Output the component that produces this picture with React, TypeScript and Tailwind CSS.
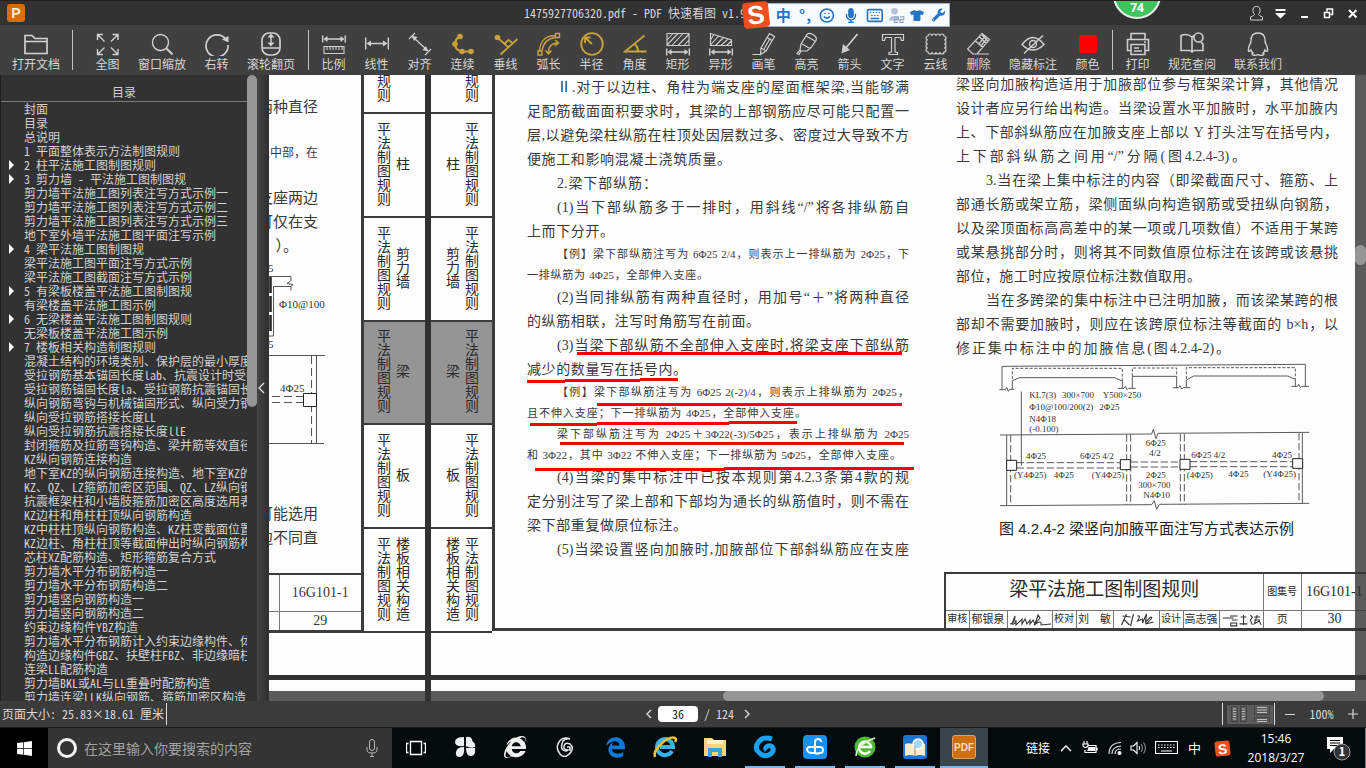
import type { ReactNode } from "react";
import { FaInternetExplorer, FaMicrophone, FaTshirt, FaWindows, FaWrench } from "react-icons/fa";
import { FaEdgeLegacy } from "react-icons/fa6";
import { Keyboard, Smile } from "lucide-react";
import clsx from "clsx";

interface Tool {
    label: string;
    icon: ReactNode;
    gold?: boolean;
    wide?: boolean;
}

interface Line {
    text: string;
    indent?: boolean;
    small?: boolean;
    width?: string;
}

function Glyph({ children }: { children: ReactNode }) {
    return (
        <svg viewBox="0 0 24 24" className="size-6" fill="none" stroke="currentColor" strokeWidth="1.4" aria-hidden="true">
            {children}
        </svg>
    );
}

const viewTools: Tool[] = [
    {
        label: "全图",
        icon: <Glyph><path d="M1.5 8V2.500H7M1.5 2.500l7 7M16.5 2.500H22V8M22 2.500l-7 7M1.5 17v5.500H7M1.5 22.500l7-7M22 17v5.500h-5.500M22 22.500l-7-7" /></Glyph>,
    },
    {
        label: "窗口缩放",
        wide: true,
        icon: <Glyph><circle cx="10.5" cy="10.5" r="8" /><path d="M16.5 16.5l6 6" strokeWidth="2" /></Glyph>,
    },
    {
        label: "右转",
        icon: <Glyph><path d="M21 7.500A11 11 0 1 0 23 13" strokeWidth="1.7" /><path d="M23.5 4v6.500l-6.500-3z" fill="currentColor" stroke="none" /></Glyph>,
    },
    {
        label: "滚轮翻页",
        wide: true,
        icon: (
            <Glyph>
                <rect x="3" y="1" width="18" height="22" rx="7" strokeWidth="1.7" />
                <path d="M3 16h18M12 4v9" />
                <path d="M12 1.5l3.5 4h-7zM12 14.5l3.5-4h-7z" fill="currentColor" stroke="none" />
            </Glyph>
        ),
    },
];

const spanArrow = (y: number) => (
    <>
        <path d={`M.7 ${y - 3.5}v7M23.3 ${y - 3.5}v7M3 ${y}h18`} />
        <path d={`M1.5 ${y}l4-3v6zM22.5 ${y}l-4-3v6z`} fill="currentColor" stroke="none" />
    </>
);

const drawTools: Tool[] = [
    { label: "比例", icon: <Glyph>{spanArrow(7)}<path d="M2 14.5h20v7H2zM5 15v3M8 15v3M11 15v3M14 15v3M17 15v3M20 15v3" strokeWidth="1.1" /></Glyph> },
    { label: "线性", icon: <Glyph><path d="M.7 5.5v12M23.3 5.5v12M3 11.5h18" /><path d="M1.5 11.5l4.5-3v6zM22.5 11.5l-4.5-3v6z" fill="currentColor" stroke="none" /></Glyph> },
    { label: "对齐", icon: <Glyph><path d="M1 7L7 1M17 23l6-6M5 5l14 13" strokeWidth="1.2" /><path d="M3.5 3.5l6 1.5-3.5 4zM20.5 19.5l-6-1.5 3.5-4z" fill="currentColor" stroke="none" /></Glyph> },
    {
        label: "连续",
        gold: true,
        icon: (
            <Glyph>
                <path d="M9 4.5Q4 7 4 12q0 6 7 7.5h9" strokeWidth="2" />
                <g fill="currentColor" stroke="none"><circle cx="9" cy="4.5" r="2.800" /><circle cx="4" cy="12" r="2.800" /><circle cx="11" cy="19.5" r="2.800" /><circle cx="20" cy="19.5" r="2.800" /></g>
            </Glyph>
        ),
    },
    { label: "垂线", gold: true, icon: <Glyph><path d="M4 6l10 9M6.5 22.5L23.5 7M10 12l4.5-4 4.5 3.5" strokeWidth="1.8" /><circle cx="3.5" cy="5.5" r="2.800" fill="currentColor" stroke="none" /></Glyph> },
    {
        label: "弧长",
        gold: true,
        icon: <Glyph><path d="M2.5 19C3 9 9 3.500 18.5 3.500M1 19h4v4H1zM18.5 1.5h4v4h-4zM5 19Q6.500 7 18.500 5.500M11.5 21Q11 11.500 21 11M8.500 18.500l3 3.500 3-3.500M18 8l3.500 3-3.500 3" /></Glyph>,
    },
    { label: "半径", gold: true, icon: <Glyph><circle cx="12" cy="12" r="10.8" strokeWidth="1.8" /><path d="M12 12L5.5 6M5 11V5.500h5.500" strokeWidth="1.8" /></Glyph> },
    { label: "角度", gold: true, icon: <Glyph><path d="M21.5 3.500L2 19.5h21.5M11.5 12q4 3 3.5 7.500" strokeWidth="1.8" /></Glyph> },
    { label: "矩形", icon: <Glyph><path d="M1 1.5h22v12H1zM1 8l6-6.5M1 13l11-11.500M6 13.500L17 1.500M12 13.500L23 2M18 13.500l5-5.500" strokeWidth="1.1" />{spanArrow(20)}</Glyph> },
    { label: "异形", icon: <Glyph><path d="M1.5 1.5L22.5 8v5.500h-21zM1.5 8l3-5M1.5 13l8-9M6.500 13.500l8-8M12 13.500l6.500-6M17.500 13.500L22.500 9" strokeWidth="1.1" />{spanArrow(20)}</Glyph> },
    { label: "画笔", icon: <Glyph><path d="M17.5 1.5l5 3L14 19l-5.500 3.500L9 16zM15 5.500l5 3M9 16l5 3M.5 22.500H8M17.500 7.500L12 17" strokeWidth="1.2" /></Glyph> },
    { label: "高亮", icon: <Glyph><path d="M12 2.500q2-2 5-.5l3 2q2 2 1 4.500L16.500 15 12 19H6l-1-1 1-6zM11 4l9 5M7 12l8 4.500M5 18l1 1-2 3.500-2-1z" strokeWidth="1.2" /></Glyph> },
    { label: "箭头", icon: <Glyph><path d="M19.500 2L7 17" strokeWidth="1.7" /><path d="M3.500 21.500L5 12l7 6z" fill="currentColor" stroke="none" /></Glyph> },
    { label: "文字", icon: <Glyph><path d="M1.5 2.500h21v6h-2l-1-3h-5.500V20l2.500.5v2H8v-2l2.500-.5V5.500h-6l-1 3h-2z" strokeWidth="1.2" /></Glyph> },
    {
        label: "云线",
        icon: (
            <Glyph>
                <path
                    d="M4 4a2 2 0 0 1 4 0a2 2 0 0 1 4 0a2 2 0 0 1 4 0a2 2 0 0 1 4 0a2 2 0 0 1 0 4a2 2 0 0 1 0 4a2 2 0 0 1 0 4a2 2 0 0 1 0 4a2 2 0 0 1-4 0a2 2 0 0 1-4 0a2 2 0 0 1-4 0a2 2 0 0 1-4 0a2 2 0 0 1 0-4a2 2 0 0 1 0-4a2 2 0 0 1 0-4a2 2 0 0 1 0-4z"
                    strokeWidth="1.2"
                />
            </Glyph>
        ),
    },
    { label: "删除", icon: <Glyph><path d="M15 1.500l7.500 6L10 22H6l-5.500-5zM8.500 9l7.500 6.500M5 22h17M12.500 5l7 6.500M15 3l6 6M18 4.500l-6.500 8M20 6.500l-6.500 8" strokeWidth="1.200" /></Glyph> },
];

const lineClass = "h-full w-px shrink-0 bg-[#c4c4c4]";

function ToolButton({ tool }: { tool: Tool }) {
    return (
        <button
            type="button"
            className={clsx(
                "flex h-full shrink-0 flex-col items-center pt-[7px] text-[12px] leading-[15px] whitespace-nowrap text-[#d6d6d6]",
                tool.wide ? "w-[66px]" : "w-[43px]"
            )}
        >
            <span className={tool.gold ? "text-[#c9a13b]" : "text-[#cfcfcf]"}>{tool.icon}</span>
            {tool.label}
        </button>
    );
}

function ImeBar() {
    return (
        <div className="absolute top-[2px] left-[746px] flex h-6 w-[204px] items-center gap-1 border border-[#9fb4c8] bg-[#f8fbfe] pr-1 text-[#2373c8]">
            <span className="-ml-1 flex size-[26px] shrink-0 -rotate-6 items-center justify-center rounded bg-[#f04e1f] font-['Liberation_Sans'] text-[26px] leading-none font-bold text-white">S</span>
            <span className="w-[22px] text-center text-[15px] font-bold">中</span>
            <span className="w-[18px] text-center text-[15px] font-bold">°,</span>
            <Smile className="mx-px size-[17px]" strokeWidth={2.4} />
            <FaMicrophone className="mx-1 size-[15px]" />
            <Keyboard className="size-[19px]" strokeWidth={2.2} />
            <svg viewBox="0 0 18 18" className="mx-px size-[18px]" fill="#b3c2d8">
                <circle cx="7" cy="5" r="3.5" />
                <path d="M1 15q0-5 6-5t5 5z" />
                <path d="M7 11h4v3H7v3h4M13 11h4v3h-4v3h4" fill="none" stroke="#8ea5c6" strokeWidth="1.2" />
            </svg>
            <FaTshirt className="size-[15px]" />
            <FaWrench className="ml-1 size-[14px]" />
        </div>
    );
}

function TitleBar() {
    return (
        <header className="relative flex h-[25px] shrink-0 items-center overflow-visible border-t border-[#222] bg-[#323232] text-[#d6d6d6]">
            <span className="ml-[7px] flex size-[18px] items-center justify-center rounded-[3px] bg-[#d46f0e] font-['Liberation_Sans'] text-[14px] leading-none font-bold text-[#f8ead8]">P</span>
            <h1 className="ml-[499px] text-[12px] whitespace-nowrap">1475927706320.pdf - PDF 快速看图 v1.9</h1>
            <div className="ml-auto flex h-full items-center gap-[9px] pr-[6px] text-white">
                <button type="button" aria-label="用户">
                    <svg viewBox="0 0 15 15" className="size-[15px]" fill="none" stroke="#d0d0d0">
                        <path d="M7.500.5q4 0 3.500 4.500 0 2-1.500 3.500 0 1 4 2.500v3H1.500v-3q4-1.500 4-2.500Q4 7 4 5 3.500.5 7.500.5z" />
                    </svg>
                </button>
                <button type="button" aria-label="菜单">
                    <svg viewBox="0 0 15 15" className="size-[15px]" fill="currentColor"><path d="M2.500 3h10v2h-10zM2 7h11l-5.500 5.500z" /></svg>
                </button>
                <button type="button" aria-label="最小化">
                    <svg viewBox="0 0 15 15" className="size-[15px]" fill="currentColor"><path d="M4 10h7v2H4z" /></svg>
                </button>
                <button type="button" aria-label="还原">
                    <svg viewBox="0 0 15 15" className="size-[15px]" fill="none" stroke="currentColor" strokeWidth="1.5"><path d="M3.500 6.500h5v5h-5zM6 5.500V3h5.500v5.500H9.500" /></svg>
                </button>
                <button type="button" aria-label="关闭">
                    <svg viewBox="0 0 15 15" className="size-[15px]" fill="none" stroke="currentColor" strokeWidth="2"><path d="M4 4l7.500 7.500M11.500 4L4 11.500" /></svg>
                </button>
            </div>
            <ImeBar />
            <div className="absolute top-0 right-[205px] z-10 flex h-[18px] w-12 items-end justify-center overflow-hidden">
                <span className="flex size-12 shrink-0 items-end justify-center rounded-full border-2 border-[#e6efe8] bg-[#3fc45c] pb-[2px] font-['Open_Sans'] text-[12px] leading-[14px] font-bold text-white">74</span>
            </div>
        </header>
    );
}

function ToolBar() {
    return (
        <div className="flex h-[50px] shrink-0 bg-[#404040]" role="toolbar" aria-label="工具">
            <button type="button" className="flex w-[72px] shrink-0 flex-col items-center pt-[7px] text-[12px] leading-[15px] text-[#d6d6d6]">
                <Glyph><path d="M1 21.500v-18h7l3 3h12v15zM1 9.500h22" strokeWidth="1.6" /></Glyph>
                打开文档
            </button>
            <div className="py-[5px]"><div className={lineClass} /></div>
            <div className="ml-[13px] flex">
                {viewTools.map((tool) => <ToolButton key={tool.label} tool={tool} />)}
            </div>
            <div className="ml-1 py-[5px]"><div className={lineClass} /></div>
            <div className="ml-[3px] flex">
                {drawTools.map((tool) => <ToolButton key={tool.label} tool={tool} />)}
                <ToolButton tool={{ label: "隐藏标注", wide: true, icon: <Glyph><path d="M1 12.500q11-14 22 0-11 11-22 0zM22 3.500l-19 18" /><circle cx="12" cy="12" r="3.5" /></Glyph> }} />
                <ToolButton tool={{ label: "颜色", icon: <Glyph><rect x="3" y="3" width="18" height="18" rx="2" fill="#ff0000" stroke="none" /></Glyph> }} />
            </div>
            <div className="ml-[3px] py-[5px]"><div className={lineClass} /></div>
            <div className="ml-[3px] flex">
                <ToolButton tool={{ label: "打印", icon: <Glyph><path d="M5 7V1.500h14V7M4.500 18.500H1.500v-11h21v11h-3M5 12.500h14v10H5zM8 16h5M8 19h8M18 10h2" strokeWidth="1.6" /></Glyph> }} />
                <ToolButton tool={{ label: "规范查阅", wide: true, icon: <Glyph><path d="M12 20.500V5Q7 1 1 3.500v15h8.500q2 0 2.500 2 .5-2 2.500-2H23v-7M12 5q1-1 2.500-1.500M21 10l2.500 3" strokeWidth="1.6" /><circle cx="18.5" cy="5.5" r="4.5" strokeWidth="1.6" /></Glyph> }} />
                <ToolButton tool={{ label: "联系我们", wide: true, icon: <Glyph><path d="M12 1q7 0 7 7.500 0 2 1 3.500 2 4 1.500 7-1 1-2.500-1-.5 2-2 3 2 1 0 2-3 1-5-.5-2 1.500-5 .5-2-1 0-2-1.500-1-2-3-1.500 2-2.500 1-.5-3 1.500-7 1-1.500 1-3.500Q5 1 12 1z" /></Glyph> }} />
            </div>
        </div>
    );
}

const outline: { text: string; branch?: boolean }[] = [
    { text: "封面" },
    { text: "目录" },
    { text: "总说明" },
    { text: "1 平面整体表示方法制图规则" },
    { text: "2 柱平法施工图制图规则", branch: true },
    { text: "3 剪力墙 - 平法施工图制图规", branch: true },
    { text: "剪力墙平法施工图列表注写方式示例一" },
    { text: "剪力墙平法施工图列表注写方式示例二" },
    { text: "剪力墙平法施工图列表注写方式示例三" },
    { text: "地下室外墙平法施工图平面注写示例" },
    { text: "4 梁平法施工图制图规", branch: true },
    { text: "梁平法施工图平面注写方式示例" },
    { text: "梁平法施工图截面注写方式示例" },
    { text: "5 有梁板楼盖平法施工图制图规", branch: true },
    { text: "有梁楼盖平法施工图示例" },
    { text: "6 无梁楼盖平法施工图制图规则", branch: true },
    { text: "无梁板楼盖平法施工图示例" },
    { text: "7 楼板相关构造制图规则", branch: true },
    { text: "混凝土结构的环境类别、保护层的最小厚度" },
    { text: "受拉钢筋基本锚固长度lab、抗震设计时受拉" },
    { text: "受拉钢筋锚固长度la、受拉钢筋抗震锚固长度" },
    { text: "纵向钢筋弯钩与机械锚固形式、纵向受力钢筋" },
    { text: "纵向受拉钢筋搭接长度LL" },
    { text: "纵向受拉钢筋抗震搭接长度llE" },
    { text: "封闭箍筋及拉筋弯钩构造、梁并筋等效直径" },
    { text: "KZ纵向钢筋连接构造" },
    { text: "地下室KZ的纵向钢筋连接构造、地下室KZ的" },
    { text: "KZ、QZ、LZ箍筋加密区范围、QZ、LZ纵向钢筋" },
    { text: "抗震框架柱和小墙肢箍筋加密区高度选用表" },
    { text: "KZ边柱和角柱柱顶纵向钢筋构造" },
    { text: "KZ中柱柱顶纵向钢筋构造、KZ柱变截面位置" },
    { text: "KZ边柱、角柱柱顶等截面伸出时纵向钢筋构造" },
    { text: "芯柱XZ配筋构造、矩形箍筋复合方式" },
    { text: "剪力墙水平分布钢筋构造一" },
    { text: "剪力墙水平分布钢筋构造二" },
    { text: "剪力墙竖向钢筋构造一" },
    { text: "剪力墙竖向钢筋构造二" },
    { text: "约束边缘构件YBZ构造" },
    { text: "剪力墙水平分布钢筋计入约束边缘构件、体积" },
    { text: "构造边缘构件GBZ、扶壁柱FBZ、非边缘暗柱" },
    { text: "连梁LL配筋构造" },
    { text: "剪力墙BKL或AL与LL重叠时配筋构造" },
    { text: "剪力墙连梁LLK纵向钢筋、箍筋加密区构造" },
];

function Sidebar() {
    return (
        <aside className="flex w-[269px] shrink-0 overflow-hidden border-l border-[#1e1e1e] bg-[#323232] text-[#d2d2d2]">
            <nav className="w-[246px] shrink-0 overflow-hidden text-[12px]" aria-label="目录">
                <h2 className="flex h-[27px] items-end justify-center border-b border-[#7c7c7c] leading-[18px]">目录</h2>
                <ul>
                    {outline.map((item) => (
                        <li key={item.text} className="flex h-[14px] items-center pl-2">
                            <span className="flex w-[15px] shrink-0">
                                {item.branch && (
                                    <svg viewBox="0 0 5 10" className="h-[10px] w-[5px]" fill="#fff"><path d="M0 0l5 5-5 5z" /></svg>
                                )}
                            </span>
                            <a href="#" className="leading-[14px] whitespace-nowrap">{item.text}</a>
                        </li>
                    ))}
                </ul>
            </nav>
            <div className="w-[10px] shrink-0">
                <div className="h-[332px] rounded-full bg-[#969696]" />
            </div>
            <button type="button" aria-label="收起" className="flex w-3 shrink-0 items-center bg-linear-to-r from-[#444] to-[#2f2f2f]">
                <svg viewBox="0 0 8 12" className="h-3 w-2" fill="none" stroke="#e4e4e4" strokeWidth="1.3"><path d="M7 1L2 6l5 5" /></svg>
            </button>
        </aside>
    );
}

const chapters = ["柱", "剪力墙", "梁", "板", "楼板相关构造"];

function ChapterTabs({ mirrored }: { mirrored?: boolean }) {
    const cell = clsx("flex justify-start gap-[5px] border-b-2 border-[#3c3c3c] px-[13px]", mirrored && "flex-row-reverse");
    return (
        <div className="flex h-[558px] w-[61px] shrink-0 flex-col text-[14px] leading-[14px] text-[#2a2a2a]">
            <div className={clsx(cell, "h-[39px] items-end pb-[9px]")}>
                <span className="w-[14px]">规则</span>
            </div>
            {chapters.map((name) => (
                <div key={name} className={clsx(cell, "flex-1 items-center", name === "梁" && "bg-[#959595]")}>
                    <span className="w-[14px]">平法制图规则</span>
                    <span className="w-[14px]">{name}</span>
                </div>
            ))}
        </div>
    );
}

function SectionSketch() {
    return (
        <svg viewBox="0 0 92 190" className="h-[190px] w-[92px]" fill="none" stroke="#555" strokeWidth="1">
            <path d="M0 18.500h22v4l-4 3 6 1-2 2M5 28.500h17v4M4.500 28v50H0M0 97.500h56M47.500 97.500v88M0 185.500h55" />
            <path d="M1.500 19v56" strokeWidth="2.5" stroke="#222" strokeDasharray="16 3" />
            <path d="M42.500 98v87M3 138.500h31M3 144.500h31" strokeDasharray="8 4" />
            <path d="M34.500 135.500h13v13h-13z" fill="#fff" stroke="#222" />
            <g fill="#333" stroke="none" fontSize="11" className="font-['Liberation_Serif']">
                <text x="-1" y="14">5</text>
                <text x="10" y="50">Φ10@100</text>
                <text x="-1" y="90">5</text>
                <text x="11" y="134">4Φ25</text>
            </g>
        </svg>
    );
}

function LeftPage() {
    const row = "flex h-6 shrink-0 items-center justify-end whitespace-nowrap";
    return (
        <div className="flex h-[600px] w-[156px] shrink-0 items-start overflow-hidden bg-[#fdfdfd]">
            <div className="flex h-[558px] w-[95px] shrink-0 flex-col overflow-hidden border-r-[3px] border-b-[3px] border-[#3c3c3c] text-[15px]">
                <div className="flex flex-col pt-5 pr-[43px]">
                    <p className={row}>两种直径</p>
                    <p className={clsx(row, "mt-[22px] text-[12px]")}>主中部，在</p>
                    <p className={clsx(row, "mt-[21px]")}>支座两边</p>
                    <p className={row}>可仅在支</p>
                    <p className={clsx(row, "pr-5")}>）。</p>
                </div>
                <SectionSketch />
                <div className="flex flex-col pt-[54px] pr-[43px]">
                    <p className={row}>可能选用</p>
                    <p className={row}>边不同直</p>
                </div>
                <table className="mt-auto h-[57px] w-full table-fixed border-t-2 border-[#3c3c3c] text-center">
                    <tbody>
                        <tr className="h-[37px]">
                            <td className="w-[10px] border-r border-[#777]" />
                            <td className="text-[14px]">16G101-1</td>
                        </tr>
                        <tr className="border-t border-[#777]">
                            <td className="border-r border-[#777]" />
                            <td className="text-[14px] leading-[16px]">29</td>
                        </tr>
                    </tbody>
                </table>
            </div>
            <ChapterTabs />
        </div>
    );
}

const mainText: Line[] = [
    { text: "Ⅱ.对于以边柱、角柱为端支座的屋面框架梁,当能够满", indent: true },
    { text: "足配筋截面面积要求时，其梁的上部钢筋应尽可能只配置一" },
    { text: "层,以避免梁柱纵筋在柱顶处因层数过多、密度过大导致不方" },
    { text: "便施工和影响混凝土浇筑质量。", width: "w-[204px]" },
    { text: "2.梁下部纵筋：", indent: true, width: "w-[130px]" },
    { text: "(1)当下部纵筋多于一排时，用斜线“/”将各排纵筋自", indent: true },
    { text: "上而下分开。", width: "w-[87px]" },
    { text: "【例】梁下部纵筋注写为 6Φ25 2/4，则表示上一排纵筋为 2Φ25，下", indent: true, small: true },
    { text: "一排纵筋为 4Φ25，全部伸入支座。", small: true, width: "w-[181px]" },
    { text: "(2)当同排纵筋有两种直径时，用加号“＋”将两种直径", indent: true },
    { text: "的纵筋相联，注写时角筋写在前面。", width: "w-[233px]" },
    { text: "(3)当梁下部纵筋不全部伸入支座时,将梁支座下部纵筋", indent: true },
    { text: "减少的数量写在括号内。", width: "w-[160px]" },
    { text: "【例】梁下部纵筋注写为 6Φ25 2(-2)/4，则表示上排纵筋为 2Φ25，", indent: true, small: true },
    { text: "且不伸入支座；下一排纵筋为 4Φ25，全部伸入支座。", small: true, width: "w-[279px]" },
    { text: "梁下部纵筋注写为 2Φ25＋3Φ22(-3)/5Φ25，表示上排纵筋为 2Φ25", indent: true, small: true },
    { text: "和 3Φ22，其中 3Φ22 不伸入支座；下一排纵筋为 5Φ25，全部伸入支座。", small: true, width: "w-[374px]" },
    { text: "(4)当梁的集中标注中已按本规则第4.2.3条第4款的规", indent: true },
    { text: "定分别注写了梁上部和下部均为通长的纵筋值时，则不需在" },
    { text: "梁下部重复做原位标注。", width: "w-[160px]" },
    { text: "(5)当梁设置竖向加腋时,加腋部位下部斜纵筋应在支座", indent: true },
];

const sideText: Line[] = [
    { text: "梁竖向加腋构造适用于加腋部位参与框架梁计算，其他情况" },
    { text: "设计者应另行给出构造。当梁设置水平加腋时，水平加腋内" },
    { text: "上、下部斜纵筋应在加腋支座上部以 Y 打头注写在括号内，" },
    { text: "上下部斜纵筋之间用“/”分隔(图4.2.4-3)。", width: "w-[290px]" },
    { text: "3.当在梁上集中标注的内容（即梁截面尺寸、箍筋、上", indent: true },
    { text: "部通长筋或架立筋，梁侧面纵向构造钢筋或受扭纵向钢筋，" },
    { text: "以及梁顶面标高高差中的某一项或几项数值）不适用于某跨" },
    { text: "或某悬挑部分时，则将其不同数值原位标注在该跨或该悬挑" },
    { text: "部位，施工时应按原位标注数值取用。", width: "w-[245px]" },
    { text: "当在多跨梁的集中标注中已注明加腋，而该梁某跨的根", indent: true },
    { text: "部却不需要加腋时，则应在该跨原位标注等截面的 b×h，以" },
    { text: "修正集中标注中的加腋信息(图4.2.4-2)。", width: "w-[274px]" },
];

function Paragraphs({ lines }: { lines: Line[] }) {
    return (
        <>
            {lines.map((line) => (
                <p
                    key={line.text}
                    className={clsx(
                        "[text-align-last:justify]",
                        line.small ? "h-[21px] text-[11px] leading-[21px]" : "h-6 text-[14px] leading-6",
                        line.indent && "pl-[30px]",
                        line.width ?? "w-[382px]"
                    )}
                >
                    {line.text}
                </p>
            ))}
        </>
    );
}

function RedMarks() {
    return (
        <svg viewBox="0 0 400 480" className="pointer-events-none absolute top-0 left-0 h-[480px] w-[400px]" fill="none" stroke="#f80000" strokeWidth="3">
            <path d="M50 278.500h325M0 306.500h38M38 305.500h75M113 304.500h38M70 329.500h305M3 349.500h67M70 348.500h132M202 347.500h68M33 368.500h344M8 394.500h190M197 393.500h190" />
        </svg>
    );
}

const beamLabels: [number, number, string][] = [
    [268, 147, "KL7(3)"],
    [366, 147, "300×700"],
    [488, 147, "Y500×250"],
    [268, 183, "Φ10@100/200(2)"],
    [478, 183, "2Φ25"],
    [268, 219, "N4Φ18"],
    [268, 250, "(-0.100)"],
    [258, 330, "4Φ25"],
    [420, 330, "6Φ25  4/2"],
    [617, 290, "6Φ25"],
    [628, 321, "4/2"],
    [754, 328, "6Φ25  4/2"],
    [996, 328, "4Φ25"],
    [222, 388, "(Y4Φ25)"],
    [341, 388, "4Φ25"],
    [455, 386, "(Y4Φ25)"],
    [617, 386, "2Φ25"],
    [740, 386, "(4Φ25)"],
    [865, 384, "4Φ25"],
    [970, 383, "(Y4Φ25)"],
    [595, 416, "300×700"],
    [610, 448, "N4Φ10"],
];

function BeamDrawing() {
    return (
        <svg viewBox="174 36 936 450" className="ml-[42px] h-[150px] w-[312px] shrink-0" fill="none" stroke="#5a5a5a" strokeWidth="3">
            <path d="M186 121V52l910-6v66M178 122h18l4-7 5 12 4-6h14M217 121V95l22-9h284l24 10v22M534 118h18l4-6 5 10 4-4h22M577 118V82h133v36M698 116h18l4-6 5 10 4-4h22M739 115V93l22-12h282l23 10v21M1054 112h18l4-6 5 10 4-4h22" />
            <path d="M217 90V58h330v38M577 82V57h133v25M739 90V56h327v34" strokeDasharray="9 5" />
            <path d="M244 128v222M180 258l455-3 5-14 8 28 6-16 454-3M180 470l455-3 8-12 7 26 8-15 450-3M200 258v212M1087 252v211" />
            <path d="M212 258v212M560 256v212M572 256v212M721 255v212M733 255v212M1077 252v211M230 341h312M230 357h312M572 339h150M572 354h150M750 338h308M750 353h308" strokeDasharray="22 8" />
            <path d="M200 334h30v30h-30zM541 332h30v30h-30zM720 331h30v30h-30zM1058 329h30v29h-30z" fill="#fff" stroke="#222" />
            <g fill="#333" stroke="none" fontSize="27" className="font-['Liberation_Serif']">
                {beamLabels.map(([x, y, text]) => (
                    <text key={`${x}-${y}`} x={x} y={y}>{text}</text>
                ))}
            </g>
        </svg>
    );
}

function Signature({ d }: { d: string }) {
    return (
        <svg viewBox="0 0 44 16" className="h-4 w-full" fill="none" stroke="#333" strokeWidth="1.1"><path d={d} /></svg>
    );
}

function TitleBlock() {
    const cell = "border-t border-r border-[#777] leading-[16px] whitespace-nowrap";
    const role = clsx(cell, "text-[10px]");
    const name = clsx(cell, "text-[11px]");
    return (
        <table className="mt-auto -ml-3 h-[56px] w-[422px] table-fixed border-t-2 border-l-2 border-[#3c3c3c] text-center text-[#2c2c2c]">
            <colgroup>
                <col className="w-6" /><col className="w-[38px]" /><col className="w-[45px]" />
                <col className="w-6" /><col className="w-[37px]" /><col className="w-[46px]" />
                <col className="w-6" /><col className="w-[36px]" /><col className="w-[44px]" />
                <col className="w-[38px]" /><col className="w-[66px]" />
            </colgroup>
            <tbody>
                <tr className="h-[37px]">
                    <td colSpan={9} className="border-r border-[#777] pb-1 text-[19px]">梁平法施工图制图规则</td>
                    <td className="border-r border-[#777] text-[10px] whitespace-nowrap">图集号</td>
                    <td className="text-[14px]">16G101-1</td>
                </tr>
                <tr>
                    <td className={role}>审核</td>
                    <td className={name}>郁银泉</td>
                    <td className={cell}><Signature d="M2 13q5-1 5-8l-3 8q3 1 4-4v5l6-6v5l3-5 2 5 3-4v4l3-4 2 4 3-9 2 3-6 7q8-6 7 0l10-1" /></td>
                    <td className={role}>校对</td>
                    <td className={name}>刘　敏</td>
                    <td className={cell}><Signature d="M8 5l8 1M12 3L7 14M9 8l6 6M19 3l-3 12M23 5q4-1 0 5l5-2v4l4-9-1 8 5-5q4 0-5 7l8-2" /></td>
                    <td className={role}>设计</td>
                    <td className={name}>高志强</td>
                    <td className={cell}><Signature d="M3 7h11M10 5h8M12 9h6M11 12v3h6v-3zM21 6h6M24 4v10M20 13h8M31 4l2 2-2 3 2 5M35 6h6M38 4l-3 9 5-3 2 4M35 9h6" /></td>
                    <td className={name}>页</td>
                    <td className="border-t border-[#777] text-[14px] leading-[16px]">30</td>
                </tr>
            </tbody>
        </table>
    );
}

function RightPage() {
    return (
        <div className="flex h-[600px] w-[960px] shrink-0 items-start bg-[#fdfdfd]">
            <ChapterTabs mirrored />
            <div className="flex h-[556px] flex-1 border-b-[3px] border-l-[3px] border-[#3c3c3c] pl-8">
                <div className="relative w-[382px] shrink-0 pt-px">
                    <Paragraphs lines={mainText} />
                    <RedMarks />
                </div>
                <div className="ml-[47px] flex flex-1 flex-col">
                    <div className="-mt-[2px]">
                        <Paragraphs lines={sideText} />
                    </div>
                    <BeamDrawing />
                    <p className="ml-[43px] pt-2 font-['Liberation_Sans','Noto_Sans_CJK_SC',sans-serif] text-[15px] leading-5 text-[#222]">图 4.2.4-2 梁竖向加腋平面注写方式表达示例</p>
                    <TitleBlock />
                </div>
            </div>
        </div>
    );
}

function DocumentView() {
    return (
        <main className="relative min-w-0 flex-1 overflow-hidden bg-[#323232] font-['Liberation_Serif','Noto_Sans_CJK_SC',serif] text-[#3a3a3a]">
            <div className="flex gap-[6px]">
                <LeftPage />
                <RightPage />
            </div>
            <div className="mt-[5px] flex gap-[6px]">
                <div className="h-[30px] w-[156px] shrink-0 bg-[#fdfdfd]" />
                <div className="h-[30px] w-[960px] shrink-0 bg-[#fdfdfd]" />
            </div>
            <div className="absolute top-0 right-0 bottom-0 w-[11px] bg-[#323232]/80">
                <div className="mt-[170px] h-5 rounded-full bg-[#969696]" />
            </div>
            <div className="absolute right-[11px] bottom-0 left-0 flex h-[10px] justify-end bg-[#323232]/80 pr-[31px]">
                <div className="w-[57%] rounded-full bg-[#969696]" />
            </div>
        </main>
    );
}

function StatusBar() {
    return (
        <footer className="grid h-[27px] shrink-0 grid-cols-[1fr_auto_1fr] items-center border-b border-[#1c1c1c] bg-[#3b3b3b] text-[12px] text-[#d8d8d8]">
            <div className="flex h-full items-center">
                <span className="flex h-[22px] items-center border-r border-[#ddd] pr-[2px] pl-[2px] whitespace-nowrap">页面大小: 25.83×18.61 厘米</span>
            </div>
            <form className="flex items-center gap-[6px] pl-[30px]">
                <button type="button" aria-label="上一页">
                    <svg viewBox="0 0 6 10" className="h-[10px] w-[6px]" fill="none" stroke="currentColor" strokeWidth="1.4"><path d="M5 1L1 5l4 4" /></svg>
                </button>
                <input aria-label="页码" defaultValue="36" className="h-4 w-10 rounded-[4px] bg-white text-center text-[12px] text-[#222]" />
                <span>/ 124</span>
                <button type="button" aria-label="下一页" className="ml-1">
                    <svg viewBox="0 0 6 10" className="h-[10px] w-[6px]" fill="none" stroke="currentColor" strokeWidth="1.4"><path d="M1 1l4 4-4 4" /></svg>
                </button>
            </form>
            <div className="flex items-center justify-end pr-2">
                <div className="flex h-[22px] items-center border-x border-[#ddd] pr-px pl-1">
                    <div className="flex h-[19px] w-[46px] items-center justify-around bg-[#5c5c5c]">
                        <svg viewBox="0 0 16 16" className="size-4" fill="none" stroke="#bdbdbd" strokeWidth="1">
                            <path d="M.5.5h6v15h-6zM9.500.5h6v15h-6z" stroke="#444" />
                            <path d="M2 3h3M2 5.500h3M2 8h3M2 10.500h3M2 13h3M11 3h3M11 5.500h3M11 8h3M11 10.500h3M11 13h3" />
                        </svg>
                        <svg viewBox="0 0 16 16" className="size-4" fill="none" stroke="#bdbdbd" strokeWidth="1">
                            <path d="M.5 0v8.500h15V0M.5 16v-4.500h15V16" stroke="#444" />
                            <path d="M3 1.500h10M3 4h10M3 6.500h10M3 13.500h10M3 15.500h10" />
                        </svg>
                    </div>
                </div>
                <button type="button" aria-label="缩小" className="ml-[10px]">
                    <svg viewBox="0 0 10 10" className="size-[10px]" stroke="currentColor"><path d="M0 5.500h10" /></svg>
                </button>
                <span className="w-[53px] text-center">100%</span>
                <button type="button" aria-label="放大">
                    <svg viewBox="0 0 10 10" className="size-[10px]" stroke="currentColor" strokeWidth="1.2"><path d="M0 5h10M5 0v10" /></svg>
                </button>
            </div>
        </footer>
    );
}

const apps: { name: string; open?: boolean; icon: ReactNode }[] = [
    {
        name: "浏览器",
        icon: (
            <svg viewBox="0 0 24 24" className="size-6" fill="#eceff0">
                <path d="M11 2v9Q2 12 2 7t9-5zM13 2q4-1 6 2t-6 8zM22 13q1 9-5 8-4-1-4-8zM11 12q1 9-4 10-5 0-4-5t8-5zM13 11q1-6 6-5 4 2 3 6-4 2-9-1z" />
            </svg>
        ),
    },
    { name: "IE", icon: <FaInternetExplorer className="size-[22px] text-[#f0f0f0]" /> },
    { name: "G", icon: <svg viewBox="0 0 20 20" className="size-5" fill="none" stroke="#e6e6e6" strokeWidth="1.5"><path d="M15 2Q8-1 4 5T5 17t11-2q3-5-1-8-5-2-6 2t4 4q-2 2-5 0T8 4q3-3 7-2zM12 10h3v4" /></svg> },
    { name: "Edge", icon: <FaEdgeLegacy className="size-[21px] text-[#0a79d8]" /> },
    { name: "Internet Explorer", icon: <svg viewBox="0 0 24 24" className="size-6 overflow-visible" fill="none"><path d="M19 16a8 8 0 1 1 1-4H7" stroke="#35b5ee" strokeWidth="4" /><path d="M2 22C-1 15 15 0 22 3q2 1 0 4" stroke="#f3c02e" strokeWidth="2.5" /></svg> },
    {
        name: "文件资源管理器",
        icon: <svg viewBox="0 0 24 24" className="size-6"><path d="M1 3h8l2 2h12v16H1z" fill="#f7d678" /><path d="M4 5h16v4H4z" fill="#fff2c4" /><path d="M5 13h14v9h-4v-5H9v5H5z" fill="#38a6dc" /></svg>,
    },
    { name: "广联达", open: true, icon: <svg viewBox="0 0 24 24" className="size-6" fill="none" stroke="#18a2ef" strokeWidth="5"><path d="M19 4Q10 1 5.500 7t0 10q5 6 12 2 4-3 2-7-2-2-5-1-3 2-1 4" strokeLinejoin="round" /></svg> },
    { name: "同步", open: true, icon: <svg viewBox="0 0 24 24" className="size-6"><rect width="24" height="24" rx="4" fill="#1590f5" /><path d="M12 19V7q0-3 3-3t3 3M12 12h5q3 0 3 3t-3 3q-3 1-5 0M12 12H7q-3 0-3 3 1 3 5 3h3" fill="none" stroke="#fff" strokeWidth="2" /></svg> },
    { name: "安全浏览器", open: true, icon: <svg viewBox="0 0 24 24" className="size-6"><circle cx="12" cy="12" r="10.5" fill="#4dbb32" /><path d="M17 16a6 6 0 1 1 1-4H7" fill="none" stroke="#fff" strokeWidth="2.5" /><path d="M3 21Q3 10 22 3" fill="none" stroke="#dff5d0" strokeWidth="1.5" /></svg> },
    { name: "看图", open: true, icon: <svg viewBox="0 0 24 24" className="size-6"><rect width="24" height="24" rx="3" fill="#1976d2" /><path d="M2 9q5-2 10 1 5-3 10-1v12q-5-2-10 0-5-2-10 0z" fill="#f5ead6" /><circle cx="15" cy="9" r="5" fill="#a4d8f7" stroke="#fff" strokeWidth="1.5" /><path d="M12 11v10" stroke="#9c8a70" /></svg> },
];

function Taskbar() {
    return (
        <div className="flex h-10 shrink-0 items-stretch overflow-hidden bg-[#030b0d] text-white">
            <button type="button" aria-label="开始" className="flex w-12 shrink-0 items-center justify-center bg-black">
                <FaWindows className="size-[17px]" />
            </button>
            <label className="flex w-[344px] shrink-0 items-center bg-[#343434] pr-3 pl-[9px]">
                <span className="size-5 shrink-0 rounded-full border-[3px] border-[#f2f2f2]" />
                <input aria-label="搜索" placeholder="在这里输入你要搜索的内容" className="ml-[7px] min-w-0 flex-1 bg-transparent text-[14px] placeholder:text-[#a2a2a2]" />
                <svg viewBox="0 0 16 18" className="h-[18px] w-4" fill="none" stroke="#b5b5b5"><rect x="5.5" y=".5" width="5" height="11" rx="2.5" /><path d="M3 8v3q0 3 5 3t5-3V8M8 14v3M6 17.500h4" /></svg>
            </label>
            <button type="button" aria-label="任务视图" className="flex w-12 shrink-0 items-center justify-center">
                <svg viewBox="0 0 20 16" className="h-4 w-5" fill="none" stroke="#fff"><path d="M4.500 1.500h11v13h-11zM2.500 3.500h-2v9h2M17.500 3.500h2v9h-2" strokeWidth="1.3" /></svg>
            </button>
            <div className="flex">
                {apps.map((app) => (
                    <button
                        key={app.name}
                        type="button"
                        aria-label={app.name}
                        className="flex w-[50px] shrink-0 flex-col items-center"
                    >
                        <span className="flex flex-1 items-center">{app.icon}</span>
                        <span className={clsx("h-[2px] w-10", app.open && "bg-[#76b9f5]")} />
                    </button>
                ))}
                <button type="button" className="flex w-12 shrink-0 flex-col items-center bg-[#39454a]">
                    <span className="flex flex-1 items-center">
                        <span className="flex size-6 items-center justify-center rounded-[3px] border border-[#e0a060] bg-[#cf6f10] font-['Liberation_Sans'] text-[10px] font-bold text-[#f5dcc0]">PDF</span>
                    </span>
                    <span className="h-[2px] w-full bg-[#76b9f5]" />
                </button>
            </div>
            <div className="ml-auto flex items-center text-[12px]">
                <span>链接</span>
                <svg viewBox="0 0 12 8" className="ml-[10px] h-2 w-3" fill="none" stroke="#fff" strokeWidth="1.3"><path d="M1 7l5-5 5 5" /></svg>
                <svg viewBox="0 0 16 14" className="ml-[10px] h-[14px] w-4" fill="none" stroke="#fff" strokeWidth="1.2"><path d="M6 4.500h8v7H3V9M15 6.500v3M2 0v3M5 0v3M1 3h5v2Q3.500 8 1 5z" /><path d="M7 6.500h5.500v3H6z" fill="#fff" /></svg>
                <svg viewBox="0 0 14 14" className="ml-[10px] size-[14px]" fill="none" stroke="#ddd" strokeWidth="1.2"><path d="M1 13Q1 2 13 1.500M4 13q0-7.500 9-8M7 13q0-5 6-5" /><circle cx="11.5" cy="12" r="1.5" fill="#fff" /></svg>
                <svg viewBox="0 0 17 14" className="ml-2 h-[14px] w-[17px]" fill="none" stroke="#fff" strokeWidth="1.1"><path d="M1 5h2.500L7 1.500v11L3.500 9H1zM9 5q1.500 2 0 4" /><path d="M11 3q3 4 0 8M13.500 1.500q4 5.500 0 11" stroke="#888" /></svg>
                <svg viewBox="0 0 23 14" className="ml-2 h-[14px] w-[23px]" fill="none" stroke="#fff"><path d="M.5.5h22v12H.5z" strokeWidth="1.2" /><path d="M3 4h17M3 6.500h17" strokeDasharray="1.5 1.5" /><path d="M6 10h11" /></svg>
                <span className="ml-[10px] text-[13px] font-medium">中</span>
                <span className="ml-[14px] flex size-[15px] -rotate-6 items-center justify-center rounded-[2px] bg-[#f04e1f] font-['Liberation_Sans'] text-[14px] leading-none font-bold">S</span>
                <div className="ml-4 w-[60px] text-center font-['Open_Sans'] text-[12px] leading-[19px]">
                    <p>15:46</p>
                    <p>2018/3/27</p>
                </div>
                <button type="button" aria-label="通知" className="ml-5">
                    <svg viewBox="0 0 26 26" className="size-[26px]" fill="#fff">
                        <path d="M1 2h16v12H8l-4 4v-4H1z" />
                        <path d="M4 5.500h10M4 8h10M4 10.500h8" stroke="#000" />
                        <circle cx="16" cy="17" r="8" fill="#333" stroke="#999" />
                        <text x="16" y="21" textAnchor="middle" fontSize="12" fontWeight="bold">1</text>
                    </svg>
                </button>
                <span className="ml-[9px] h-10 border-r border-[#777] pr-1" />
            </div>
        </div>
    );
}

export default function App() {
    return (
        <div className="flex h-screen flex-col overflow-hidden bg-[#323232] font-['Noto_Sans_Mono_CJK_SC','Noto_Sans_CJK_SC',sans-serif]">
            <TitleBar />
            <ToolBar />
            <div className="flex min-h-0 flex-1">
                <Sidebar />
                <DocumentView />
            </div>
            <StatusBar />
            <Taskbar />
        </div>
    );
}
